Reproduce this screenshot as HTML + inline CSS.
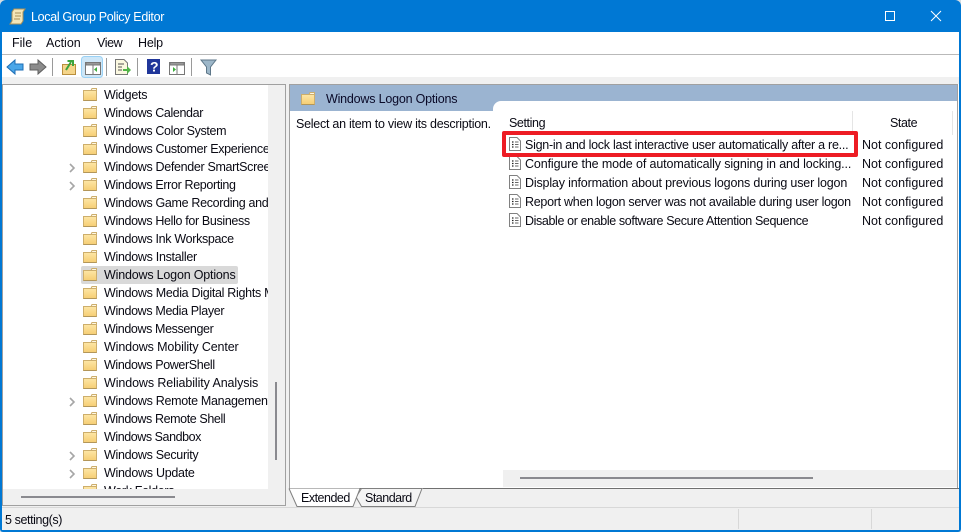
<!DOCTYPE html>
<html><head><meta charset="utf-8">
<style>
html,body{margin:0;padding:0;width:961px;height:532px;overflow:hidden;background:#d5dde2}
body{position:relative;font-family:"Liberation Sans",sans-serif;font-size:12px;color:#000}
.a{position:absolute}
.t{position:absolute;white-space:nowrap;line-height:18px;height:18px;font-size:12.5px;color:#0a0a14}
#tree .t{left:101px;letter-spacing:-.33px}
#tree svg.fo{left:80px}
#tree svg.ch{left:66px}
svg{position:absolute;overflow:visible}
</style></head><body>
<svg width="0" height="0" style="position:absolute"><defs>
<linearGradient id="g" x1="0" y1="0" x2="0" y2="1"><stop offset="0" stop-color="#fde6a6"/><stop offset="1" stop-color="#f6cd73"/></linearGradient>
<g id="f"><path d="M8 2.500L9 .5H13.500V2.500Z" fill="#fff8e4" stroke="#cdae6c"/><rect x=".5" y="2.500" width="13" height="10" fill="url(#g)" stroke="#cdae6c"/><path d="M.5 12.500H13.500" stroke="#b2965a"/></g>
<g id="c"><path d="M1 1L5 5L1 9" fill="none" stroke="#a6a6a6" stroke-width="1.6"/></g>
<g id="d"><path d="M.5 .5H8L11.500 4V13.500H.5Z" fill="#fff" stroke="#808080"/><path d="M3 5h1.500M3 7.500h1.500M3 10h1.500" stroke="#222" stroke-width="1.300"/><path d="M6 5h3.500M6 7.500h3.500M6 10h3.500" stroke="#666"/></g>
</defs></svg>

<!-- Window frame -->
<div class="a" style="left:0;top:0;width:961px;height:532px;background:#0078d4;border-radius:6px 6px 3px 3px"></div>
<div class="a" style="left:2px;top:32px;width:957px;height:498px;background:#f0f0f0"></div>

<!-- Title bar -->
<svg style="left:9px;top:8px" width="17" height="17"><path d="M5 1H16L14 4V13L12 16H1L3 13V4Z" fill="#f4e6b8" stroke="#a99058"/><path d="M6 5H12M6 8H12M5 11H11" stroke="#a99058"/></svg>
<div class="t" style="left:31px;top:8px;color:#fff;letter-spacing:-.32px">Local Group Policy Editor</div>
<svg style="left:885px;top:11px" width="10" height="10"><rect x=".5" y=".5" width="9" height="9" fill="none" stroke="#fff"/></svg>
<svg style="left:931px;top:11px" width="10" height="10"><path d="M0 0L10 10M10 0L0 10" stroke="#fff"/></svg>

<!-- Menu -->
<div class="a" style="left:2px;top:32px;width:957px;height:22px;background:#fff"></div>
<div class="a" style="left:2px;top:54px;width:957px;height:1px;background:#b9b9b9"></div>
<div class="t" style="left:12px;top:34px">File</div>
<div class="t" style="left:46px;top:34px">Action</div>
<div class="t" style="left:97px;top:34px;letter-spacing:-.4px">View</div>
<div class="t" style="left:138px;top:34px;letter-spacing:-.2px">Help</div>

<!-- Toolbar -->
<div class="a" style="left:2px;top:55px;width:957px;height:22px;background:#fff"></div>
<div class="a" style="left:2px;top:77px;width:957px;height:7px;background:#f0f0f0"></div>
<svg style="left:0;top:55px" width="240" height="24">
<path d="M7 12L15 5V9H23V15H15V19Z" fill="#4aa6e8" stroke="#1c6db5"/>
<path d="M46 12L38 5V9H30V15H38V19Z" fill="#8c8c8c" stroke="#5f5f5f"/>
<path d="M52.500 3V21" stroke="#9a9a9a"/>
<path d="M62.500 9.500H75.500V19.500H62.500Z" fill="#f5d58a" stroke="#b98f3e"/>
<path d="M66 15L71 7M67.500 6H73V11" fill="none" stroke="#3da53d" stroke-width="2"/>
<rect x="81.500" y="1.500" width="21" height="21" rx="3" fill="#cde6f7" stroke="#99d1f5"/>
<rect x="85.500" y="7.500" width="15" height="12" fill="#fff" stroke="#777"/><path d="M86 7.500H100V10H86ZM93 10V19" fill="#999" stroke="#777"/><path d="M97 12V17L94 14.500Z" fill="#3cae3c"/>
<path d="M106.500 3V21" stroke="#9a9a9a"/>
<path d="M115.500 4.500H124L127.500 8V19.500H115.500Z" fill="#fbf8e0" stroke="#777"/><path d="M118 9H124M118 12H122M118 15H122" stroke="#555"/><path d="M123 14H127V11L131 15L127 19V16H123Z" fill="#52b548"/>
<path d="M137.500 3V21" stroke="#9a9a9a"/>
<rect x="147" y="4" width="13" height="15" fill="#20369a"/><text x="150" y="16.500" font-family="Liberation Sans" font-size="14" font-weight="bold" fill="#fff">?</text>
<rect x="169.500" y="7.500" width="15" height="12" fill="#fff" stroke="#777"/><path d="M170 7.500H184V10H170ZM177 10V19" fill="#999" stroke="#777"/><path d="M173 12V17L176 14.500Z" fill="#3cae3c"/>
<path d="M191.500 3V21" stroke="#9a9a9a"/>
<path d="M201 5H216L210.500 12V20L206.500 18V12Z" fill="#9db7c9" stroke="#5d7688"/>
</svg>

<!-- Tree pane -->
<div class="a" style="left:2px;top:84px;width:284px;height:422px;background:#f0f0f0;box-sizing:border-box;border:1px solid #a0a0a0"></div>
<div class="a" style="left:3px;top:85px;width:265px;height:404px;background:#fff;overflow:hidden" id="tree">
<div class="a" style="left:78px;top:181px;width:157px;height:18px;background:#d9d9d9;border-radius:2px"></div>
<svg class="fo" style="top:3px" width="14" height="13"><use href="#f"/></svg><div class="t" style="top:1px;letter-spacing:-.28px">Widgets</div>
<svg class="fo" style="top:21px" width="14" height="13"><use href="#f"/></svg><div class="t" style="top:19px;letter-spacing:-.37px">Windows Calendar</div>
<svg class="fo" style="top:39px" width="14" height="13"><use href="#f"/></svg><div class="t" style="top:37px;letter-spacing:-.35px">Windows Color System</div>
<svg class="fo" style="top:57px" width="14" height="13"><use href="#f"/></svg><div class="t" style="top:55px">Windows Customer Experience</div>
<svg class="ch" style="top:78px" width="8" height="11"><use href="#c"/></svg><svg class="fo" style="top:75px" width="14" height="13"><use href="#f"/></svg><div class="t" style="top:73px">Windows Defender SmartScreen</div>
<svg class="ch" style="top:96px" width="8" height="11"><use href="#c"/></svg><svg class="fo" style="top:93px" width="14" height="13"><use href="#f"/></svg><div class="t" style="top:91px;letter-spacing:-.35px">Windows Error Reporting</div>
<svg class="fo" style="top:111px" width="14" height="13"><use href="#f"/></svg><div class="t" style="top:109px">Windows Game Recording and</div>
<svg class="fo" style="top:129px" width="14" height="13"><use href="#f"/></svg><div class="t" style="top:127px;letter-spacing:-.35px">Windows Hello for Business</div>
<svg class="fo" style="top:147px" width="14" height="13"><use href="#f"/></svg><div class="t" style="top:145px">Windows Ink Workspace</div>
<svg class="fo" style="top:165px" width="14" height="13"><use href="#f"/></svg><div class="t" style="top:163px;letter-spacing:-.3px">Windows Installer</div>
<svg class="fo" style="top:183px" width="14" height="13"><use href="#f"/></svg><div class="t" style="top:181px;letter-spacing:-.19px">Windows Logon Options</div>
<svg class="fo" style="top:201px" width="14" height="13"><use href="#f"/></svg><div class="t" style="top:199px;letter-spacing:-.3px">Windows Media Digital Rights M</div>
<svg class="fo" style="top:219px" width="14" height="13"><use href="#f"/></svg><div class="t" style="top:217px;letter-spacing:-.35px">Windows Media Player</div>
<svg class="fo" style="top:237px" width="14" height="13"><use href="#f"/></svg><div class="t" style="top:235px;letter-spacing:-.39px">Windows Messenger</div>
<svg class="fo" style="top:255px" width="14" height="13"><use href="#f"/></svg><div class="t" style="top:253px;letter-spacing:-.13px">Windows Mobility Center</div>
<svg class="fo" style="top:273px" width="14" height="13"><use href="#f"/></svg><div class="t" style="top:271px;letter-spacing:-.37px">Windows PowerShell</div>
<svg class="fo" style="top:291px" width="14" height="13"><use href="#f"/></svg><div class="t" style="top:289px;letter-spacing:-.1px">Windows Reliability Analysis</div>
<svg class="ch" style="top:312px" width="8" height="11"><use href="#c"/></svg><svg class="fo" style="top:309px" width="14" height="13"><use href="#f"/></svg><div class="t" style="top:307px;letter-spacing:-.3px">Windows Remote Management</div>
<svg class="fo" style="top:327px" width="14" height="13"><use href="#f"/></svg><div class="t" style="top:325px;letter-spacing:-.4px">Windows Remote Shell</div>
<svg class="fo" style="top:345px" width="14" height="13"><use href="#f"/></svg><div class="t" style="top:343px;letter-spacing:-.44px">Windows Sandbox</div>
<svg class="ch" style="top:366px" width="8" height="11"><use href="#c"/></svg><svg class="fo" style="top:363px" width="14" height="13"><use href="#f"/></svg><div class="t" style="top:361px;letter-spacing:-.31px">Windows Security</div>
<svg class="ch" style="top:384px" width="8" height="11"><use href="#c"/></svg><svg class="fo" style="top:381px" width="14" height="13"><use href="#f"/></svg><div class="t" style="top:379px;letter-spacing:-.28px">Windows Update</div>
<svg class="fo" style="top:399px" width="14" height="13"><use href="#f"/></svg><div class="t" style="top:397px">Work Folders</div>
</div>
<!-- Tree scrollbars -->
<div class="a" style="left:275px;top:382px;width:2px;height:78px;background:#8a8a8f"></div>
<div class="a" style="left:21px;top:496px;width:154px;height:2px;background:#8a8a8f"></div>

<!-- Right pane -->
<div class="a" style="left:289px;top:84px;width:670px;height:405px;background:#fff"></div>
<div class="a" style="left:289px;top:84px;width:669px;height:1px;background:#a0a0a0"></div>
<div class="a" style="left:289px;top:84px;width:1px;height:405px;background:#a0a0a0"></div>
<div class="a" style="left:290px;top:85px;width:667px;height:26px;background:#9bb4d1"></div>
<div class="a" style="left:493px;top:101px;width:464px;height:12px;background:#fff;border-radius:8px 0 0 0"></div>
<svg style="left:301px;top:92px" width="14" height="13"><use href="#f"/></svg>
<div class="t" style="left:326px;top:90px;color:#0a0a28;letter-spacing:-.2px">Windows Logon Options</div>
<div class="t" style="left:296px;top:115px;letter-spacing:-.26px">Select an item to view its description.</div>
<div class="t" style="left:509px;top:114px;letter-spacing:-.4px">Setting</div>
<div class="t" style="left:890px;top:114px;letter-spacing:-.4px">State</div>
<div class="a" style="left:852px;top:111px;width:1px;height:24px;background:#e5e5e5"></div>
<div class="a" style="left:952px;top:111px;width:1px;height:24px;background:#e5e5e5"></div>

<!-- Rows -->
<svg style="left:509px;top:137px" width="12" height="14"><use href="#d"/></svg>
<div class="t" style="left:525px;top:136px;letter-spacing:-.26px">Sign-in and lock last interactive user automatically after a re...</div>
<div class="t" style="left:862px;top:136px">Not configured</div>
<svg style="left:509px;top:156px" width="12" height="14"><use href="#d"/></svg>
<div class="t" style="left:525px;top:155px;letter-spacing:-.12px">Configure the mode of automatically signing in and locking...</div>
<div class="t" style="left:862px;top:155px">Not configured</div>
<svg style="left:509px;top:175px" width="12" height="14"><use href="#d"/></svg>
<div class="t" style="left:525px;top:174px;letter-spacing:-.17px">Display information about previous logons during user logon</div>
<div class="t" style="left:862px;top:174px">Not configured</div>
<svg style="left:509px;top:194px" width="12" height="14"><use href="#d"/></svg>
<div class="t" style="left:525px;top:193px;letter-spacing:-.28px">Report when logon server was not available during user logon</div>
<div class="t" style="left:862px;top:193px">Not configured</div>
<svg style="left:509px;top:213px" width="12" height="14"><use href="#d"/></svg>
<div class="t" style="left:525px;top:212px;letter-spacing:-.38px">Disable or enable software Secure Attention Sequence</div>
<div class="t" style="left:862px;top:212px">Not configured</div>

<!-- Red highlight -->
<div class="a" style="left:502px;top:131px;width:356px;height:26px;box-sizing:border-box;border:4px solid #ed1c24;border-radius:2px"></div>

<!-- Right h-scroll -->
<div class="a" style="left:503px;top:470px;width:454px;height:17px;background:#f0f0f0"></div>
<div class="a" style="left:520px;top:477px;width:293px;height:2px;background:#8a8a8f"></div>
<div class="a" style="left:957px;top:85px;width:1px;height:404px;background:#a0a0a0"></div>

<!-- Tabs -->
<div class="a" style="left:289px;top:488px;width:670px;height:1px;background:#707070"></div>
<svg style="left:285px;top:480px" width="150" height="30">
<path d="M71 26.500L75.500 18L77 8.500H138L130 26.500Z" fill="#f4f4f4"/>
<path d="M70.500 18L76.500 8.500H137L130 26.500H76.500L71 17" fill="#f4f4f4" stroke="#808080"/>
<path d="M4 8.500L12 26.500H68L75 8.500Z" fill="#fff"/>
<path d="M4 8.500L12 26.500H68L75 8.500" fill="none" stroke="#808080"/>
</svg>
<div class="t" style="left:301px;top:489px;letter-spacing:-.5px">Extended</div>
<div class="t" style="left:365px;top:489px;letter-spacing:-.5px">Standard</div>

<!-- Status bar -->
<div class="a" style="left:2px;top:507px;width:957px;height:1px;background:#d8d8d8"></div>
<div class="t" style="left:5px;top:511px;letter-spacing:-.4px">5 setting(s)</div>
<div class="a" style="left:738px;top:509px;width:1px;height:20px;background:#d8d8d8"></div>
<div class="a" style="left:871px;top:509px;width:1px;height:20px;background:#d8d8d8"></div>
</body></html>
